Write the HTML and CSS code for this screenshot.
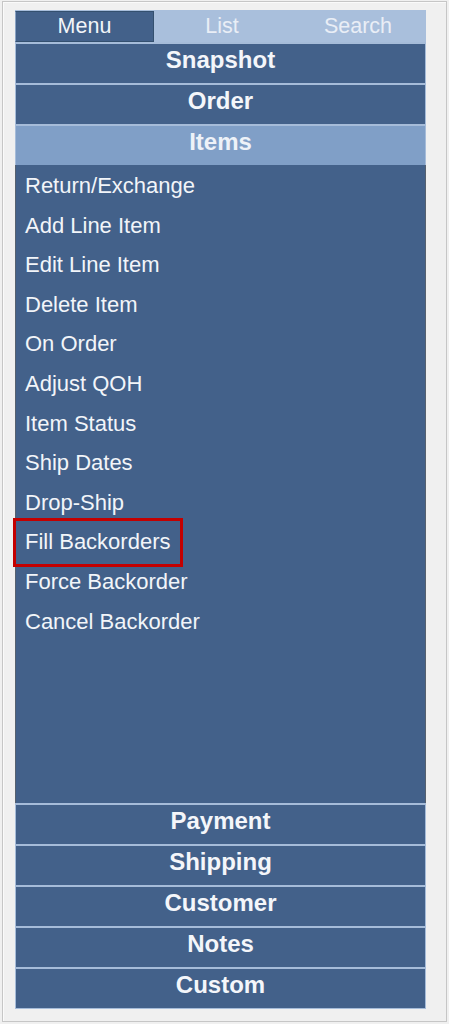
FILE: index.html
```html
<!DOCTYPE html>
<html>
<head>
<meta charset="utf-8">
<link rel="stylesheet" href="styles.css">
</head>
<body>
<div class="frame">
  <div class="panel">
    <div class="tabs">
      <div class="tab tab-active">Menu</div>
      <div class="tab">List</div>
      <div class="tab">Search</div>
    </div>
    <div class="row">Snapshot</div>
    <div class="row">Order</div>
    <div class="row row-active">Items</div>
    <ul class="list">
      <li class="item">Return/Exchange</li>
      <li class="item">Add Line Item</li>
      <li class="item">Edit Line Item</li>
      <li class="item">Delete Item</li>
      <li class="item">On Order</li>
      <li class="item">Adjust QOH</li>
      <li class="item">Item Status</li>
      <li class="item">Ship Dates</li>
      <li class="item">Drop-Ship</li>
      <li class="item item-highlight">Fill Backorders</li>
      <li class="item">Force Backorder</li>
      <li class="item">Cancel Backorder</li>
    </ul>
    <div class="row">Payment</div>
    <div class="row">Shipping</div>
    <div class="row">Customer</div>
    <div class="row">Notes</div>
    <div class="row row-last">Custom</div>
  </div>
</div>
</body>
</html>
```
FILE: styles.css
```css
html, body {
  margin: 0;
  padding: 0;
  background: #f0f0f0;
}

.frame {
  box-sizing: border-box;
  margin: 1px 0 0 2px;
  width: 445px;
  height: 1021px;
  border: 1px solid #c6c6c6;
  box-shadow: inset 1px 1px 0 #fafafa;
  padding: 8px 19px 0 12px;
  font-family: "Liberation Sans", Arial, sans-serif;
}

.panel {
  width: 411px;
  display: flex;
  flex-direction: column;
}

.tabs {
  box-sizing: border-box;
  height: 32px;
  display: grid;
  grid-template-columns: 139px 1fr 1fr;
  background: #a9bfdc;
  border-top: 1px solid #a9bfdc;
}

.tab {
  box-sizing: border-box;
  font-size: 21.5px;
  line-height: 30px;
  text-align: center;
  color: #e9eef6;
}

.tab-active {
  background: #43618a;
  border: 1px solid #34506f;
  border-left-color: #8aa3c4;
  color: #f2f5f9;
  line-height: 29px;
}

.row {
  box-sizing: border-box;
  height: 41px;
  border-top: 2px solid #a6bcd9;
  border-left: 1px solid #a6bcd9;
  border-right: 1px solid #a6bcd9;
  background: #43618a;
  color: #f4f6fa;
  font-weight: bold;
  font-size: 24px;
  line-height: 32px;
  text-align: center;
}

.row-active {
  background: #809fc7;
  color: #eef2f8;
}

.row-last {
  height: 42px;
  border-bottom: 1px solid #a6bcd9;
}

.list {
  box-sizing: border-box;
  height: 638px;
  margin: 0;
  padding: 1px 0 0;
  list-style: none;
  background: #43618a;
  border-left: 1px solid #56616f;
  border-right: 1px solid #56616f;
}

.item {
  position: relative;
  padding-left: 9px;
  font-size: 22px;
  line-height: 39.6px;
  color: #f2f5f9;
}

.item-highlight::after {
  content: "";
  position: absolute;
  left: -3px;
  top: -4px;
  width: 170px;
  height: 49px;
  box-sizing: border-box;
  border: 3px solid #c40000;
}
```
